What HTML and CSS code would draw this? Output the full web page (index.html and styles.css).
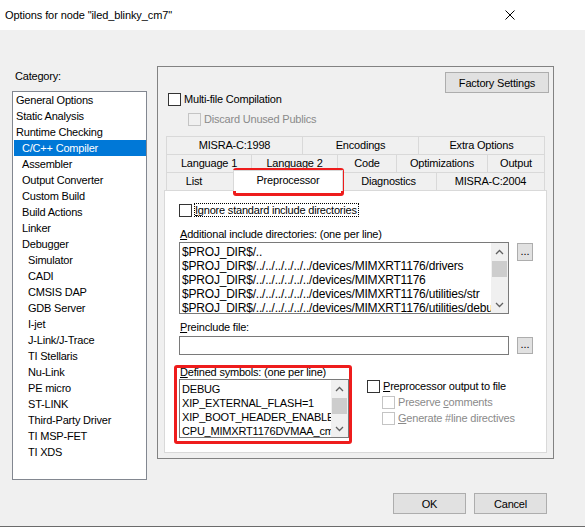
FILE: index.html
```html
<!DOCTYPE html>
<html>
<head>
<meta charset="utf-8">
<link rel="stylesheet" href="styles.css">
</head>
<body>
<div class="window">
  <div class="titlebar">
    <span class="title">Options for node "iled_blinky_cm7"</span>
    <svg class="close" viewBox="0 0 10 10"><path d="M0.5 0.5 L9.5 9.5 M9.5 0.5 L0.5 9.5" stroke="#000" stroke-width="1" fill="none"/></svg>
  </div>
  <div class="main">
    <div class="left">
      <div class="cat-label">Category:</div>
      <ul class="catlist">
        <li class="l0">General Options</li>
        <li class="l0">Static Analysis</li>
        <li class="l0">Runtime Checking</li>
        <li class="l1 sel">C/C++ Compiler</li>
        <li class="l1">Assembler</li>
        <li class="l1">Output Converter</li>
        <li class="l1">Custom Build</li>
        <li class="l1">Build Actions</li>
        <li class="l1">Linker</li>
        <li class="l1">Debugger</li>
        <li class="l2">Simulator</li>
        <li class="l2">CADI</li>
        <li class="l2">CMSIS DAP</li>
        <li class="l2">GDB Server</li>
        <li class="l2">I-jet</li>
        <li class="l2">J-Link/J-Trace</li>
        <li class="l2">TI Stellaris</li>
        <li class="l2">Nu-Link</li>
        <li class="l2">PE micro</li>
        <li class="l2">ST-LINK</li>
        <li class="l2">Third-Party Driver</li>
        <li class="l2">TI MSP-FET</li>
        <li class="l2">TI XDS</li>
      </ul>
    </div>
    <div class="group">
      <div class="topbar"><div class="btn factory">Factory Settings</div></div>
      <div class="check multi"><span class="box"></span><span class="ctext">Multi-file Compilation</span></div>
      <div class="check discard disabled"><span class="box"></span><span class="ctext">Discard Unused Publics</span></div>
      <div class="tabs">
        <div class="tabrow">
          <div class="tab w-m98">MISRA-C:1998</div>
          <div class="tab w-enc">Encodings</div>
          <div class="tab w-extra">Extra Options</div>
        </div>
        <div class="tabrow">
          <div class="tab w-lang1">Language 1</div>
          <div class="tab w-lang2">Language 2</div>
          <div class="tab w-code">Code</div>
          <div class="tab w-opt">Optimizations</div>
          <div class="tab w-out">Output</div>
        </div>
        <div class="tabrow">
          <div class="tab w-list">List</div>
          <div class="tab active">Preprocessor</div>
          <div class="tab w-diag">Diagnostics</div>
          <div class="tab w-m04">MISRA-C:2004</div>
        </div>
      </div>
      <div class="page">
        <div class="check ignore"><span class="box"></span><span class="focus"><u>I</u>gnore standard include directories</span></div>
        <div class="lbl lbl-add"><u>A</u>dditional include directories: (one per line)</div>
        <div class="field-row">
          <div class="ta ta1">
            <div class="ta-text">
              <div>$PROJ_DIR$/..</div>
              <div>$PROJ_DIR$/../../../../../../devices/MIMXRT1176/drivers</div>
              <div>$PROJ_DIR$/../../../../../../devices/MIMXRT1176</div>
              <div>$PROJ_DIR$/../../../../../../devices/MIMXRT1176/utilities/str</div>
              <div>$PROJ_DIR$/../../../../../../devices/MIMXRT1176/utilities/debug_console</div>
            </div>
            <div class="vscroll">
              <div class="arrow"><svg width="9" height="6" viewBox="0 0 9 6"><polyline points="1,5 4.5,1.5 8,5" fill="none" stroke="#606060" stroke-width="1.3"/></svg></div>
              <div class="thumb t1"></div>
              <div class="spacer"></div>
              <div class="arrow"><svg width="9" height="6" viewBox="0 0 9 6"><polyline points="1,1 4.5,4.5 8,1" fill="none" stroke="#606060" stroke-width="1.3"/></svg></div>
            </div>
          </div>
          <div class="btn dots dots1">...</div>
        </div>
        <div class="lbl lbl-pre"><u>P</u>reinclude file:</div>
        <div class="field-row">
          <div class="input"></div>
          <div class="btn dots dots2">...</div>
        </div>
        <div class="lbl lbl-def"><u>D</u>efined symbols: (one per line)</div>
        <div class="def-row">
          <div class="ta ta2">
            <div class="ta-text">
              <div>DEBUG</div>
              <div>XIP_EXTERNAL_FLASH=1</div>
              <div>XIP_BOOT_HEADER_ENABLE=1</div>
              <div>CPU_MIMXRT1176DVMAA_cm7</div>
            </div>
            <div class="vscroll">
              <div class="arrow"><svg width="9" height="6" viewBox="0 0 9 6"><polyline points="1,5 4.5,1.5 8,5" fill="none" stroke="#606060" stroke-width="1.3"/></svg></div>
              <div class="thumb t2"></div>
              <div class="spacer"></div>
              <div class="arrow"><svg width="9" height="6" viewBox="0 0 9 6"><polyline points="1,1 4.5,4.5 8,1" fill="none" stroke="#606060" stroke-width="1.3"/></svg></div>
            </div>
          </div>
          <div class="pp-col">
            <div class="check"><span class="box"></span><span class="ctext"><u>P</u>reprocessor output to file</span></div>
            <div class="check sub disabled"><span class="box"></span><span class="ctext">Preserve <u>c</u>omments</span></div>
            <div class="check sub disabled"><span class="box"></span><span class="ctext"><u>G</u>enerate #line directives</span></div>
          </div>
        </div>
      </div>
    </div>
  </div>
  <div class="footer">
    <div class="btn okbtn">OK</div>
    <div class="btn okbtn">Cancel</div>
  </div>
  <div class="annot annot-tab"></div>
  <div class="annot annot-def"></div>
</div>
</body>
</html>
```
FILE: styles.css
```css
* { box-sizing: border-box; }
html, body { margin: 0; padding: 0; }
body {
  width: 585px;
  height: 527px;
  overflow: hidden;
  font-family: "Liberation Sans", Arial, sans-serif;
  font-size: 11px;
  letter-spacing: -0.2px;
  color: #000;
  background: #f0f0f0;
}
.window {
  position: relative;
  height: 527px;
  border-bottom: 1px solid #6b6b6b;
  background: #f0f0f0;
}
.titlebar {
  height: 30px;
  background: #fff;
  display: flex;
  align-items: center;
  padding-left: 5px;
}
.title { flex: 1; font-size: 11px; letter-spacing: -0.1px; }
.close { width: 10px; height: 10px; margin-right: 70px; }

.main {
  display: flex;
  align-items: flex-start;
  padding: 36px 0 0 12px;
}
.left { width: 135px; flex: none; }
.cat-label {
  margin-top: 2px;
  height: 16px;
  line-height: 16px;
  padding-left: 3px;
}
.catlist {
  list-style: none;
  margin: 7px 0 0;
  padding: 0;
  height: 389px;
  background: #fff;
  border: 1px solid #828790;
}
.catlist li { height: 16px; line-height: 16px; white-space: nowrap; }
.l0 { padding-left: 3px; }
.l1 { padding-left: 9px; }
.l2 { padding-left: 15px; }
.catlist li.sel { background: #0078d7; color: #fff; margin-left: 1px; padding-left: 8px; }

.group {
  margin-left: 10px;
  width: 397px;
  height: 393px;
  flex: none;
  border: 1px solid #828282;
  display: flex;
  flex-direction: column;
}
.topbar { display: flex; justify-content: flex-end; padding: 5px 4px 0 0; }
.btn {
  background: #e1e1e1;
  border: 1px solid #adadad;
  color: #000;
  display: flex;
  align-items: center;
  justify-content: center;
  white-space: nowrap;
}
.factory { width: 104px; height: 21px; }

.check { display: flex; align-items: center; height: 16px; white-space: nowrap; }
.box { width: 13px; height: 13px; border: 1px solid #333; background: #fff; flex: none; }
.ctext { margin-left: 3px; }
.disabled { color: #8a8a8a; }
.disabled .box { border-color: #c4c4c4; background: transparent; }
.multi { margin: -2px 0 0 10px; }
.discard { margin: 4px 0 0 30px; }

.tabs { margin: 9px 0 0 6px; width: 383px; padding: 0 2px; }
.tabrow { display: flex; height: 18px; }
.tab {
  flex: none;
  height: 18px;
  border-top: 1px solid #d9d9d9;
  border-right: 1px solid #d9d9d9;
  text-align: center;
  line-height: 17px;
  white-space: nowrap;
}
.tab:first-child { border-left: 1px solid #d9d9d9; }
.w-m98 { width: 137px; }
.w-enc { width: 116px; }
.w-extra { width: 126px; }
.w-lang1 { width: 86px; }
.w-lang2 { width: 86px; }
.w-code { width: 59px; }
.w-opt { width: 91px; }
.w-out { width: 57px; }
.w-list { width: 69px; padding-right: 13px; }
.w-diag { width: 96px; }
.w-m04 { width: 108px; }
.tab.active {
  position: relative;
  z-index: 2;
  width: 110px;
  height: 21px;
  margin: -2px -2px 0 -2px;
  background: #fff;
  border-left: 1px solid #d9d9d9;
  line-height: 19px;
}

.page {
  margin-left: 6px;
  width: 383px;
  height: 263px;
  flex: none;
  background: #fff;
  border: 1px solid #d9d9d9;
  padding: 12px 0 0 14px;
}
.ignore { height: 14px; }
.focus {
  margin-left: 2px;
  border: 1px dotted #000;
  height: 14px;
  line-height: 12px;
  padding-right: 1px;
}
.lbl { height: 16px; line-height: 16px; padding-left: 1px; white-space: nowrap; }
.lbl-add { margin-top: 9px; }
.lbl-pre { margin-top: 5px; }
.lbl-def { margin-top: 10px; height: 14px; line-height: 14px; }

.field-row { display: flex; align-items: flex-start; }
.ta { display: flex; border: 1px solid #7a7a7a; background: #fff; flex: none; }
.ta1 { width: 330px; height: 72px; }
.ta2 { width: 170px; height: 59px; }
.ta-text {
  flex: 1;
  overflow: hidden;
  white-space: nowrap;
  padding: 2px 0 0 2px;
  line-height: 14px;
}
.ta1 .ta-text { font-size: 12px; }
.vscroll {
  width: 17px;
  flex: none;
  background: #f0f0f0;
  display: flex;
  flex-direction: column;
}
.arrow { height: 17px; flex: none; display: flex; align-items: center; justify-content: center; }
.thumb { background: #cdcdcd; margin: 1px 1px 0; flex: none; }
.t1 { height: 16px; }
.t2 { height: 16px; }
.spacer { flex: 1; }
.dots { width: 16px; line-height: 1; align-items: flex-end; padding-bottom: 3px; letter-spacing: 0; }
.dots1 { height: 18px; margin: 1px 0 0 8px; }
.dots2 { height: 17px; margin: 2px 0 0 8px; }
.input { width: 330px; height: 19px; margin-top: 1px; border: 1px solid #7a7a7a; background: #fff; }

.def-row { display: flex; align-items: flex-start; }
.pp-col { margin: -1px 0 0 18px; }
.sub { margin-left: 15px; }

.footer {
  display: flex;
  justify-content: flex-end;
  gap: 8px;
  padding-right: 38px;
  margin-top: 13px;
}
.okbtn { width: 73px; height: 21px; }

.annot {
  position: absolute;
  border: 3px solid #ee1c1c;
  border-radius: 3px;
  pointer-events: none;
}
.annot-tab { left: 233px; top: 168px; width: 111px; height: 28px; }
.annot-def { left: 174px; top: 365px; width: 178px; height: 79px; }
```
